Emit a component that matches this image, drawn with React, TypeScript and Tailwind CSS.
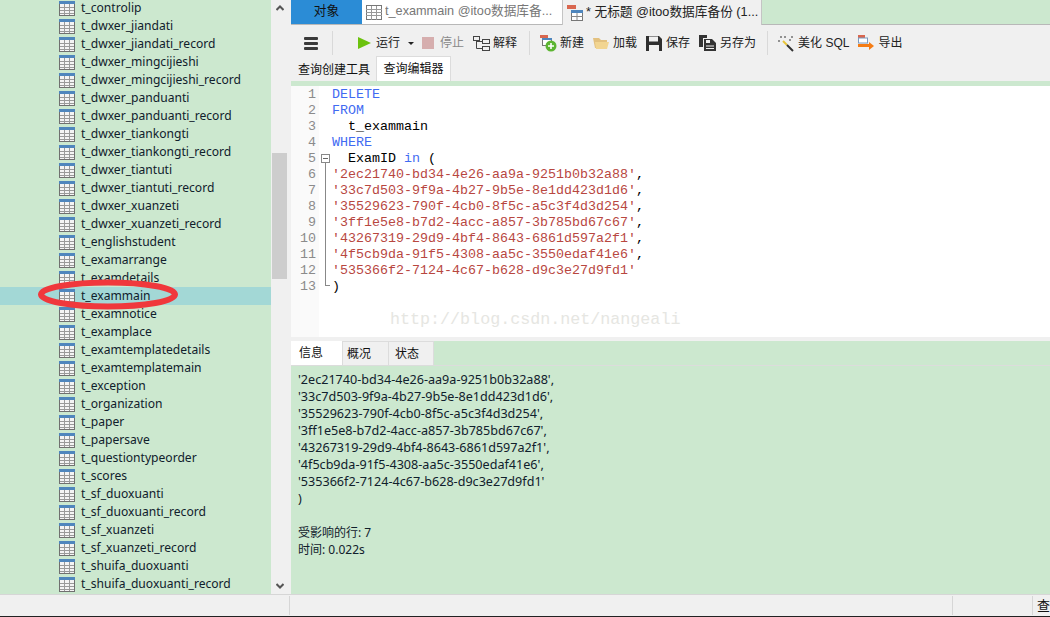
const tables = [
  "t_controlip",
  "t_dwxer_jiandati",
  "t_dwxer_jiandati_record",
  "t_dwxer_mingcijieshi",
  "t_dwxer_mingcijieshi_record",
  "t_dwxer_panduanti",
  "t_dwxer_panduanti_record",
  "t_dwxer_tiankongti",
  "t_dwxer_tiankongti_record",
  "t_dwxer_tiantuti",
  "t_dwxer_tiantuti_record",
  "t_dwxer_xuanzeti",
  "t_dwxer_xuanzeti_record",
  "t_englishstudent",
  "t_examarrange",
  "t_examdetails",
  "t_exammain",
  "t_examnotice",
  "t_examplace",
  "t_examtemplatedetails",
  "t_examtemplatemain",
  "t_exception",
  "t_organization",
  "t_paper",
  "t_papersave",
  "t_questiontypeorder",
  "t_scores",
  "t_sf_duoxuanti",
  "t_sf_duoxuanti_record",
  "t_sf_xuanzeti",
  "t_sf_xuanzeti_record",
  "t_shuifa_duoxuanti",
  "t_shuifa_duoxuanti_record",
];

const ids = [
  "2ec21740-bd34-4e26-aa9a-9251b0b32a88",
  "33c7d503-9f9a-4b27-9b5e-8e1dd423d1d6",
  "35529623-790f-4cb0-8f5c-a5c3f4d3d254",
  "3ff1e5e8-b7d2-4acc-a857-3b785bd67c67",
  "43267319-29d9-4bf4-8643-6861d597a2f1",
  "4f5cb9da-91f5-4308-aa5c-3550edaf41e6",
  "535366f2-7124-4c67-b628-d9c3e27d9fd1",
];

function TableIcon() {
  return (
    <svg width="16" height="15" viewBox="0 0 16 15" className="shrink-0">
      <rect x="0.5" y="0.5" width="15" height="14" fill="#f4f4f4" stroke="#707070" />
      <rect x="0" y="0" width="16" height="3" fill="#4f86bd" />
      <path d="M1 6.5H15M1 9.5H15M1 12.5H15M5.5 3V14M10.5 3V14" stroke="#9a9a9a" fill="none" />
    </svg>
  );
}

function Sep() {
  return <div className="w-px h-[24px] bg-[#d9d9d9]" />;
}

function ToolBtn({ icon, label, muted, className }: { icon: React.ReactNode; label: string; muted?: boolean; className?: string }) {
  return (
    <div className={`flex items-center ${className ?? ""}`}>
      {icon}
      <span className={muted ? "text-[#8a8a8a]" : "text-[#222]"}>{label}</span>
    </div>
  );
}

export default function App() {
  return (
    <div
      className="w-[1050px] h-[617px] overflow-hidden flex flex-col bg-[#f0f0f0] text-[12px] text-[#111]"
      style={{ fontFamily: '"Liberation Sans", "Noto Sans CJK SC", sans-serif' }}
    >
      <div className="flex h-[594px]">
        {/* table list */}
        <div className="relative w-[271px] bg-[#cce8cf] overflow-hidden">
          <div className="-mt-px">
            {tables.map((t) => (
              <div
                key={t}
                className={`flex items-center h-[18px] pl-[59px] gap-[6px] text-[12.1px] text-[#10202c] font-['Noto_Sans'] ${t === "t_exammain" ? "bg-[#a3d8d6]" : ""}`}
              >
                <TableIcon />
                <span>{t}</span>
              </div>
            ))}
          </div>
          <svg width="145" height="31" viewBox="0 0 145 31" className="absolute left-[36px] top-[279px]">
            <ellipse cx="72" cy="15.5" rx="67" ry="12" fill="none" stroke="#f0383c" strokeWidth="6" />
          </svg>
        </div>

        {/* scrollbar */}
        <div className="w-[20px] flex flex-col">
          <div className="h-[16px] w-[16px] ml-px flex items-center justify-center">
            <svg width="8" height="6" viewBox="0 0 8 6"><path d="M0.5 5L4 1.5L7.5 5" fill="none" stroke="#555" strokeWidth="2" /></svg>
          </div>
          <div className="mt-[137px] ml-px w-[15px] h-[126px] bg-[#cdcdcd]" />
          <div className="flex-1" />
          <div className="h-[16px] w-[16px] ml-px flex items-center justify-center">
            <svg width="8" height="6" viewBox="0 0 8 6"><path d="M0.5 1L4 4.5L7.5 1" fill="none" stroke="#555" strokeWidth="2" /></svg>
          </div>
        </div>

        {/* main */}
        <div className="flex-1 flex flex-col min-w-0">
          {/* tabs */}
          <div className="flex h-[25px] bg-[#cce8cf] border-b border-[#b8b8b8] text-[12.7px]">
            <div className="w-[71px] h-[24px] bg-[#2b8cd6] flex items-center justify-center text-[#111]">对象</div>
            <div className="w-[200px] h-[24px] bg-white flex items-center pl-[4px] gap-[3px] text-[#777]">
              <svg width="16" height="15" viewBox="0 0 16 15" className="shrink-0">
                <rect x="0.5" y="0.5" width="15" height="14" fill="#fff" stroke="#777" />
                <path d="M0 4.5H16M0 7.5H16M0 10.5H16M5.5 1V15M10.5 1V15" stroke="#999" fill="none" />
              </svg>
              <span className="truncate">t_exammain @itoo数据库备...</span>
            </div>
            <div className="w-[200px] h-[25px] bg-[#f0f0f0] border-l border-r border-[#c4c4c4] flex items-center pl-[4px] gap-[3px] text-[#222]">
              <svg width="16" height="16" viewBox="0 0 16 16" className="shrink-0">
                <rect x="0" y="0" width="9" height="4" fill="#d9674f" />
                <rect x="4.5" y="5.5" width="11" height="10" fill="#fff" stroke="#777" />
                <rect x="4" y="5" width="12" height="3" fill="#4f86bd" />
                <path d="M10 8V15M4 11.5H16" stroke="#888" fill="none" />
              </svg>
              <span className="truncate">* 无标题 @itoo数据库备份 (1...</span>
            </div>
          </div>

          {/* toolbar */}
          <div className="h-[31px] flex items-center pt-[5px] text-[12px]">
            <div className="ml-[13px] flex flex-col gap-[2px]">
              <div className="w-[14px] h-[3px] bg-[#3a3a3a] rounded-[1px]" />
              <div className="w-[14px] h-[3px] bg-[#3a3a3a] rounded-[1px]" />
              <div className="w-[14px] h-[3px] bg-[#3a3a3a] rounded-[1px]" />
            </div>
            <div className="ml-[14px]"><Sep /></div>
            <ToolBtn
              className="ml-[25px] gap-[5px]"
              label="运行"
              icon={<svg width="13" height="14" viewBox="0 0 13 14"><path d="M0 1L13 7L0 13Z" fill="#6cc20e" /></svg>}
            />
            <svg width="6" height="3" viewBox="0 0 6 3" className="ml-[8px]"><path d="M0 0H6L3 3Z" fill="#222" /></svg>
            <ToolBtn
              className="ml-[8px] gap-[6px]"
              label="停止"
              muted
              icon={<div className="w-[12px] h-[12px] bg-[#d6aeae]" />}
            />
            <ToolBtn
              className="ml-[9px] gap-[3px]"
              label="解释"
              icon={
                <svg width="17" height="15" viewBox="0 0 17 15">
                  <rect x="0.5" y="0.5" width="6" height="4" fill="none" stroke="#444" />
                  <rect x="9.5" y="3.5" width="7" height="4" fill="none" stroke="#444" />
                  <rect x="9.5" y="10.5" width="7" height="4" fill="none" stroke="#444" />
                  <path d="M3.5 5V12.5H9.5M3.5 5.5H9.5" stroke="#444" fill="none" />
                </svg>
              }
            />
            <div className="ml-[12px]"><Sep /></div>
            <ToolBtn
              className="ml-[10px] gap-[3px]"
              label="新建"
              icon={
                <svg width="17" height="17" viewBox="0 0 17 17">
                  <rect x="0" y="0" width="8" height="3" fill="#d9674f" />
                  <rect x="2.5" y="3.5" width="9" height="7" fill="#fff" stroke="#777" />
                  <rect x="2" y="3" width="10" height="2" fill="#4f86bd" />
                  <circle cx="11" cy="11" r="5.5" fill="#5cb531" />
                  <path d="M11 8V14M8 11H14" stroke="#fff" strokeWidth="1.6" />
                </svg>
              }
            />
            <ToolBtn
              className="ml-[9px] gap-[4px]"
              label="加载"
              icon={
                <svg width="16" height="14" viewBox="0 0 16 14">
                  <path d="M0 2H6L8 4H14V12H2Z" fill="#e3c17f" />
                  <path d="M2 6H16L14 13H3Z" fill="#f2d591" />
                </svg>
              }
            />
            <ToolBtn
              className="ml-[9px] gap-[4px]"
              label="保存"
              icon={
                <svg width="16" height="16" viewBox="0 0 16 16">
                  <path d="M0 1H13L16 4V16H0Z" fill="#2f2f2f" />
                  <rect x="3" y="1.5" width="9" height="5" fill="#f0f0f0" />
                  <rect x="3" y="10" width="10" height="6" fill="#f0f0f0" />
                </svg>
              }
            />
            <ToolBtn
              className="ml-[9px] gap-[4px]"
              label="另存为"
              icon={
                <svg width="17" height="16" viewBox="0 0 17 16">
                  <path d="M0 0H8V3H4V12H0Z" fill="#333" />
                  <path d="M5 4H13L17 8V16H5Z" fill="#333" />
                  <rect x="7" y="5" width="4" height="3" fill="#f0f0f0" />
                  <path d="M7 11H15M7 13.5H15" stroke="#f0f0f0" />
                </svg>
              }
            />
            <div className="ml-[11px]"><Sep /></div>
            <ToolBtn
              className="ml-[10px] gap-[4px]"
              label="美化 SQL"
              icon={
                <svg width="16" height="17" viewBox="0 0 16 17">
                  <path d="M5 6L9 10" stroke="#e8c53a" strokeWidth="2" />
                  <path d="M9 10L15 16" stroke="#333" strokeWidth="2" />
                  <path d="M0 6H2M7 1V3M14 1V3M3 1V3M11 5H13" stroke="#333" />
                </svg>
              }
            />
            <ToolBtn
              className="ml-[9px] gap-[4px]"
              label="导出"
              icon={
                <svg width="16" height="16" viewBox="0 0 16 16">
                  <rect x="0" y="0" width="7" height="3" fill="#d9674f" />
                  <rect x="0.5" y="3" width="9" height="5" fill="#fff" stroke="#7a9abf" />
                  <path d="M0 9H11V7L16 11L11 15V12H0Z" fill="#f57c14" />
                </svg>
              }
            />
          </div>

          {/* query sub tabs */}
          <div className="h-[25px] flex items-end text-[12px]">
            <div className="w-[84px] h-[23px] ml-px flex items-center justify-center">查询创建工具</div>
            <div className="w-[75px] h-[25px] bg-white border border-b-0 border-[#dcdcdc] flex items-center justify-center">查询编辑器</div>
          </div>

          <div className="h-[5px] bg-[#cce8cf]" />

          {/* editor */}
          <div className="relative h-[251px] bg-white flex overflow-hidden text-[13.33px] font-['Liberation_Mono']">
            <div className="w-[28px] bg-[#fafafa] text-right pr-[3px] text-[#8b8b8b] leading-[16px] shrink-0 pt-px">
              {Array.from({ length: 13 }, (_, i) => (
                <div key={i} className="h-[16px]">{i + 1}</div>
              ))}
            </div>
            <div className="relative w-[13px] shrink-0">
              <div className="absolute left-[2px] top-[68px] w-[9px] h-[9px] border border-[#888] bg-white flex items-center justify-center">
                <div className="w-[5px] h-px bg-[#666]" />
              </div>
              <div className="absolute left-[6px] top-[77px] h-[122px] w-px bg-[#888]" />
              <div className="absolute left-[6px] top-[199px] w-[5px] h-px bg-[#888]" />
            </div>
            <div className="leading-[16px] pt-px whitespace-pre">
              <div className="h-[16px] text-[#3f6bf2]">DELETE</div>
              <div className="h-[16px] text-[#3f6bf2]">FROM</div>
              <div className="h-[16px] text-black">  t_exammain</div>
              <div className="h-[16px] text-[#3f6bf2]">WHERE</div>
              <div className="h-[16px] text-black">  ExamID <span className="text-[#3f6bf2]">in</span> (</div>
              {ids.map((id, i) => (
                <div key={id} className="h-[16px]">
                  <span className="text-[#b8473f]">'{id}'</span>
                  {i < ids.length - 1 ? <span className="text-black">,</span> : null}
                </div>
              ))}
              <div className="h-[16px] text-black">)</div>
            </div>
            <div className="absolute left-[99px] top-[224px] text-[16.7px] leading-[20px] text-[#e6e6e2] whitespace-pre">
              http://blog.csdn.net/nangeali
            </div>
          </div>

          {/* result tabs */}
          <div className="h-[4px]" />
          <div className="h-[24px] flex bg-[#cce8cf] text-[12px]">
            <div className="w-[51px] bg-white flex items-center pl-[8px]">信息</div>
            <div className="w-[46px] bg-[#f0f0f0] border-l border-t border-[#dcdcdc] flex items-center pl-[4px]">概况</div>
            <div className="w-[46px] bg-[#f0f0f0] border-l border-r border-t border-[#dcdcdc] flex items-center pl-[6px]">状态</div>
          </div>

          {/* result */}
          <div className="flex-1 bg-[#cce8cf] border-t border-[#dcdcdc] pl-[7px] pt-[5px] leading-[17px] text-[12.6px] text-[#10202c] font-['Noto_Sans','Noto_Sans_CJK_SC',sans-serif]">
            {ids.map((id, i) => (
              <div key={id}>'{id}'{i < ids.length - 1 ? "," : ""}</div>
            ))}
            <div>)</div>
            <div className="h-[17px]" />
            <div className="text-[12px]">受影响的行: 7</div>
            <div className="text-[12px]">时间: 0.022s</div>
          </div>
        </div>
      </div>

      {/* status bar */}
      <div className="h-[22px] border-t border-[#d6d6d6] flex items-center bg-[#f0f0f0]">
        <div className="w-[291px] h-[19px] border-r border-[#d6d6d6]" />
        <div className="w-[664px] h-[19px] border-r border-[#d6d6d6]" />
        <div className="w-[80px] h-[19px] border-r border-[#d6d6d6]" />
        <div className="pl-[4px] text-[13px] whitespace-nowrap">查</div>
      </div>
      <div className="h-px bg-[#222]" />
    </div>
  );
}
